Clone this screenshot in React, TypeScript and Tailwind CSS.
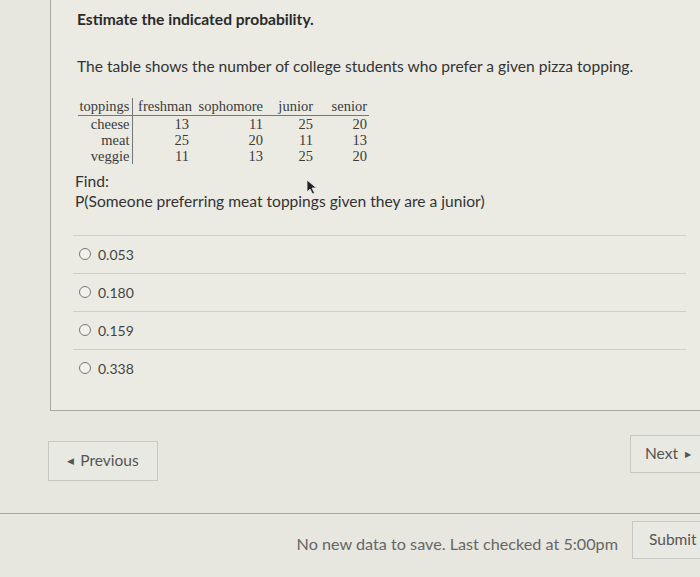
import React from "react";

const rows = [
  ["cheese", "13", "11", "25", "20"],
  ["meat", "25", "20", "11", "13"],
  ["veggie", "11", "13", "25", "20"],
];

const options = ["0.053", "0.180", "0.159", "0.338"];

export default function App() {
  return (
    <div className="w-[700px] h-[577px] overflow-hidden bg-[#e7e7df] text-[#333] relative" style={{ fontFamily: "Lato, 'Open Sans', sans-serif" }}>
      {/* question panel */}
      <div className="ml-[50px] h-[411px] border-l border-b border-[#a9a9a4] bg-[#ebebe4] pl-[26px] pt-[9px] pr-[15px]">
        <div className="text-[15.6px] font-bold leading-[20px] text-[#2a2a2a]">Estimate the indicated probability.</div>
        <div className="mt-[27px] text-[15.6px] leading-[20px] text-[#333]">The table shows the number of college students who prefer a given pizza topping.</div>

        <table className="mt-[22px] ml-[1px] text-[14.5px] leading-[16px] text-[#3a3a3a] border-collapse" style={{ fontFamily: "'Liberation Serif', serif" }}>
          <thead>
            <tr className="border-b border-[#777]">
              <th className="font-normal text-right pr-[2px] border-r border-[#777] w-[54px] h-[17px]">toppings</th>
              <th className="font-normal text-right w-[62px] pr-[2px]">freshman</th>
              <th className="font-normal text-right w-[69px]">sophomore</th>
              <th className="font-normal text-right w-[50px]">junior</th>
              <th className="font-normal text-right w-[56px] pr-[2px]">senior</th>
            </tr>
          </thead>
          <tbody>
            {rows.map((r) => (
              <tr key={r[0]}>
                <td className="text-right pr-[2px] border-r border-[#777]">{r[0]}</td>
                <td className="text-right pr-[5px]">{r[1]}</td>
                <td className="text-right">{r[2]}</td>
                <td className="text-right">{r[3]}</td>
                <td className="text-right pr-[2px]">{r[4]}</td>
              </tr>
            ))}
          </tbody>
        </table>

        <div className="text-[15.6px] leading-[20px] mt-[7px] -ml-[2px]">Find:</div>
        <div className="text-[15.6px] leading-[20px] -ml-[2px]">P(Someone preferring meat toppings given they are a junior)</div>

        <div className="mt-[24px] -ml-[4px] w-[613px]">
          {options.map((o) => (
            <div key={o} className="h-[38px] border-t border-[#cfcfc8] flex items-center pl-[6px] gap-[7px]">
              <span className="w-[12px] h-[12px] rounded-full border border-[#777] bg-[#f2f2ec] inline-block" />
              <span className="text-[14px] text-[#444]">{o}</span>
            </div>
          ))}
        </div>
      </div>

      {/* nav buttons */}
      <div className="h-[102px] flex justify-between items-start">
        <div className="ml-[48px] mt-[30px] w-[110px] h-[40px] border border-[#c8c8c2] bg-[#e9e9e3] flex items-center justify-center gap-[6px] text-[15.5px] text-[#555]">
          <span className="text-[9px]">◀</span>
          <span>Previous</span>
        </div>
        <div className="mt-[24px] -mr-[10px] w-[80px] h-[38px] border border-[#c8c8c2] bg-[#e9e9e3] flex items-center pl-[14px] gap-[7px] text-[15.5px] text-[#555]">
          <span>Next</span>
          <span className="text-[8px]">▶</span>
        </div>
      </div>

      {/* footer */}
      <div className="border-t border-[#a9a9a4] h-[64px] flex items-start justify-end">
        <div className="mt-[18px] mr-[14px] text-[16.2px] text-[#666]">No new data to save. Last checked at 5:00pm</div>
        <div className="mt-[7px] -mr-[10px] w-[78px] h-[38px] border border-[#c8c8c2] bg-[#e9e9e3] flex items-center pl-[16px] text-[15.5px] text-[#555]">Submit</div>
      </div>

      {/* mouse cursor */}
      <svg className="absolute left-[306px] top-[179px]" width="12" height="16" viewBox="0 0 12 16">
        <path d="M1 1 L1 13 L4 10 L6.5 15 L8.5 14 L6 9 L10.5 9 Z" fill="#222" stroke="#eee" strokeWidth="0.8" />
      </svg>
    </div>
  );
}
